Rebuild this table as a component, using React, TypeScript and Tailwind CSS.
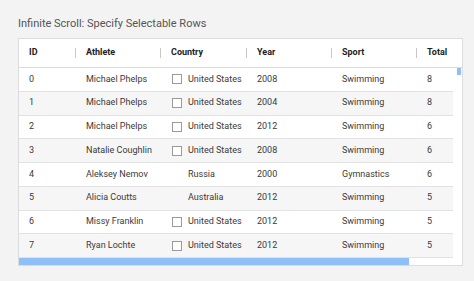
const rows = [
  { id: 0, athlete: "Michael Phelps", country: "United States", check: true, year: 2008, sport: "Swimming", total: 8 },
  { id: 1, athlete: "Michael Phelps", country: "United States", check: true, year: 2004, sport: "Swimming", total: 8 },
  { id: 2, athlete: "Michael Phelps", country: "United States", check: true, year: 2012, sport: "Swimming", total: 6 },
  { id: 3, athlete: "Natalie Coughlin", country: "United States", check: true, year: 2008, sport: "Swimming", total: 6 },
  { id: 4, athlete: "Aleksey Nemov", country: "Russia", check: false, year: 2000, sport: "Gymnastics", total: 6 },
  { id: 5, athlete: "Alicia Coutts", country: "Australia", check: false, year: 2012, sport: "Swimming", total: 5 },
  { id: 6, athlete: "Missy Franklin", country: "United States", check: true, year: 2012, sport: "Swimming", total: 5 },
  { id: 7, athlete: "Ryan Lochte", country: "United States", check: true, year: 2012, sport: "Swimming", total: 5 },
];

const headers = [
  { label: "ID", w: "w-[57px]" },
  { label: "Athlete", w: "w-[85px]" },
  { label: "Country", w: "w-[86px]" },
  { label: "Year", w: "w-[85px]" },
  { label: "Sport", w: "w-[85px]" },
  { label: "Total", w: "w-[85px]" },
];

export default function App() {
  return (
    <div
      className="w-[474px] h-[281px] bg-[#f3f3f3] pl-[18px] pt-[16px] overflow-hidden"
      style={{ fontFamily: "Roboto, 'Liberation Sans', sans-serif" }}
    >
      <div className="text-[11px] leading-[14px] text-[#555] h-[22px] pt-[1px]">
        Infinite Scroll: Specify Selectable Rows
      </div>

      {/* grid */}
      <div className="w-[445px] h-[228px] bg-white border border-[#dcdcdc] flex flex-col overflow-hidden">
        {/* header */}
        <div className="h-[29px] shrink-0 flex border-b border-[#dcdcdc] text-[9px] font-bold text-[#222] overflow-hidden">
          {headers.map((h, i) => (
            <div key={h.label} className={`${h.w} shrink-0 flex items-center`}>
              <span className="flex-1 pl-[10px]">{h.label}</span>
              {i < headers.length - 1 && <span className="w-px h-[10px] bg-[#c8c8c8]" />}
            </div>
          ))}
        </div>

        {/* body */}
        <div className="flex flex-1 min-h-0">
          <div className="w-[434px] shrink-0 flex flex-col overflow-hidden">
            {rows.map((r) => (
              <div
                key={r.id}
                className={`h-[23.75px] shrink-0 flex items-center border-b border-[#e2e2e2] text-[9px] text-[#3a3a3a] ${
                  r.id % 2 === 1 ? "bg-[#f6f6f6]" : "bg-white"
                }`}
              >
                <div className="w-[57px] shrink-0 pl-[10px]">{r.id}</div>
                <div className="w-[85px] shrink-0 pl-[10px]">{r.athlete}</div>
                <div className="w-[86px] shrink-0 pl-[11px] flex items-center gap-[6px]">
                  <span
                    className={`w-[10px] h-[10px] shrink-0 border ${r.check ? "border-[#9a9a9a] bg-white" : "border-transparent"}`}
                  />
                  <span>{r.country}</span>
                </div>
                <div className="w-[85px] shrink-0 pl-[10px]">{r.year}</div>
                <div className="w-[85px] shrink-0 pl-[10px]">{r.sport}</div>
                <div className="w-[36px] shrink-0 pl-[10px]">{r.total}</div>
              </div>
            ))}
            <div className="h-[7px] shrink-0 w-[390px] bg-[#8fbff7]" />
          </div>

          {/* vertical scrollbar */}
          <div className="flex-1 flex justify-end pr-[1px]">
            <div className="w-[4px] h-[7px] bg-[#8fbff7]" />
          </div>
        </div>
      </div>
    </div>
  );
}
